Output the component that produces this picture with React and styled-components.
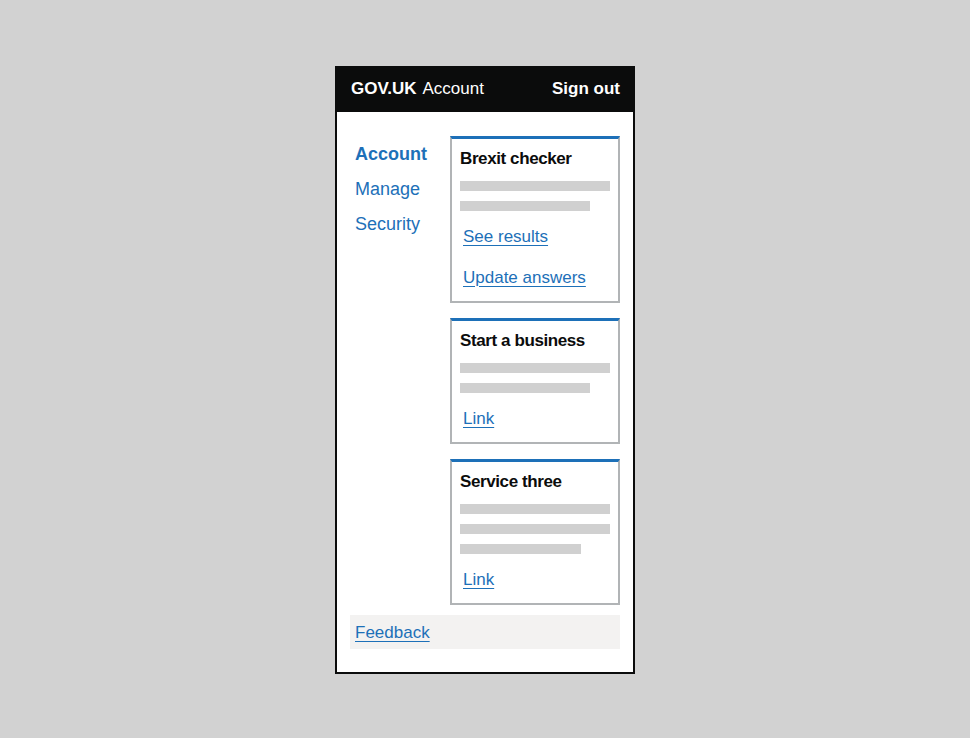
import React from "react";
import styled, { createGlobalStyle } from "styled-components";

const GlobalStyle = createGlobalStyle`
  html, body {
    margin: 0;
    padding: 0;
    background: #d2d2d2;
  }
  body {
    font-family: "Liberation Sans", Arial, sans-serif;
    -webkit-font-smoothing: antialiased;
  }
  * { box-sizing: border-box; }
`;

const Page = styled.div`
  display: flex;
  justify-content: center;
  align-items: flex-start;
  padding-top: 66px;
  min-height: 738px;
`;

const Frame = styled.div`
  width: 300px;
  border: 2px solid #0b0c0c;
  background: #ffffff;
`;

const Header = styled.header`
  height: 44px;
  background: #0b0c0c;
  color: #ffffff;
  display: flex;
  align-items: center;
  justify-content: space-between;
  padding: 0 13px 2px 14px;
  font-size: 17px;
  line-height: 20px;
`;

const Brand = styled.div`
  display: flex;
  align-items: baseline;
`;

const Logo = styled.span`
  font-weight: 700;
`;

const ServiceName = styled.span`
  font-weight: 400;
  margin-left: 6px;
`;

const SignOut = styled.a`
  color: #ffffff;
  font-weight: 700;
  text-decoration: none;
`;

const Body = styled.main`
  padding: 24px 13px 23px;
`;

const Layout = styled.div`
  display: grid;
  grid-template-columns: 100px 170px;
`;

const Nav = styled.nav`
  display: flex;
  flex-direction: column;
  gap: 15px;
  padding: 8px 0 0 5px;
`;

const NavItem = styled.a`
  color: #1d70b8;
  font-size: 18px;
  line-height: 20px;
  font-weight: ${(p) => (p.$active ? 700 : 400)};
  text-decoration: none;
`;

const Cards = styled.div`
  display: flex;
  flex-direction: column;
  gap: 15px;
`;

const Card = styled.section`
  border: 2px solid #b1b4b6;
  border-top: 3px solid #1d70b8;
  padding: 10px 8px 13px;
`;

const CardTitle = styled.h2`
  margin: 0;
  font-size: 17px;
  line-height: 20px;
  font-weight: 700;
  color: #0b0c0c;
  letter-spacing: -0.4px;
`;

const Bars = styled.div`
  margin-top: 12px;
  display: flex;
  flex-direction: column;
  gap: 10px;
`;

const Bar = styled.div`
  height: 10px;
  width: ${(p) => p.$w}px;
  background: #d0d0d0;
`;

const Links = styled.div`
  margin-top: 16px;
  padding-left: 3px;
  display: flex;
  flex-direction: column;
  align-items: flex-start;
  gap: 21px;
`;

const Link = styled.a`
  color: #1d70b8;
  font-size: 17px;
  line-height: 20px;
  text-decoration: underline;
  text-decoration-thickness: 1px;
  text-underline-offset: 3px;
`;

const Feedback = styled.div`
  margin-top: 10px;
  background: #f3f2f1;
  padding: 8px 5px 6px;
  line-height: 20px;
`;

const cards = [
  {
    title: "Brexit checker",
    bars: [150, 130],
    links: ["See results", "Update answers"],
  },
  {
    title: "Start a business",
    bars: [150, 130],
    links: ["Link"],
  },
  {
    title: "Service three",
    bars: [150, 150, 121],
    links: ["Link"],
  },
];

export default function App() {
  return (
    <>
      <GlobalStyle />
      <Page>
        <Frame>
          <Header>
            <Brand>
              <Logo>GOV.UK</Logo>
              <ServiceName>Account</ServiceName>
            </Brand>
            <SignOut href="#">Sign out</SignOut>
          </Header>
          <Body>
            <Layout>
              <Nav>
                <NavItem href="#" $active>Account</NavItem>
                <NavItem href="#">Manage</NavItem>
                <NavItem href="#">Security</NavItem>
              </Nav>
              <Cards>
                {cards.map((c) => (
                  <Card key={c.title}>
                    <CardTitle>{c.title}</CardTitle>
                    <Bars>
                      {c.bars.map((w, i) => (
                        <Bar key={i} $w={w} />
                      ))}
                    </Bars>
                    <Links>
                      {c.links.map((l) => (
                        <Link href="#" key={l}>{l}</Link>
                      ))}
                    </Links>
                  </Card>
                ))}
              </Cards>
            </Layout>
            <Feedback>
              <Link href="#">Feedback</Link>
            </Feedback>
          </Body>
        </Frame>
      </Page>
    </>
  );
}
